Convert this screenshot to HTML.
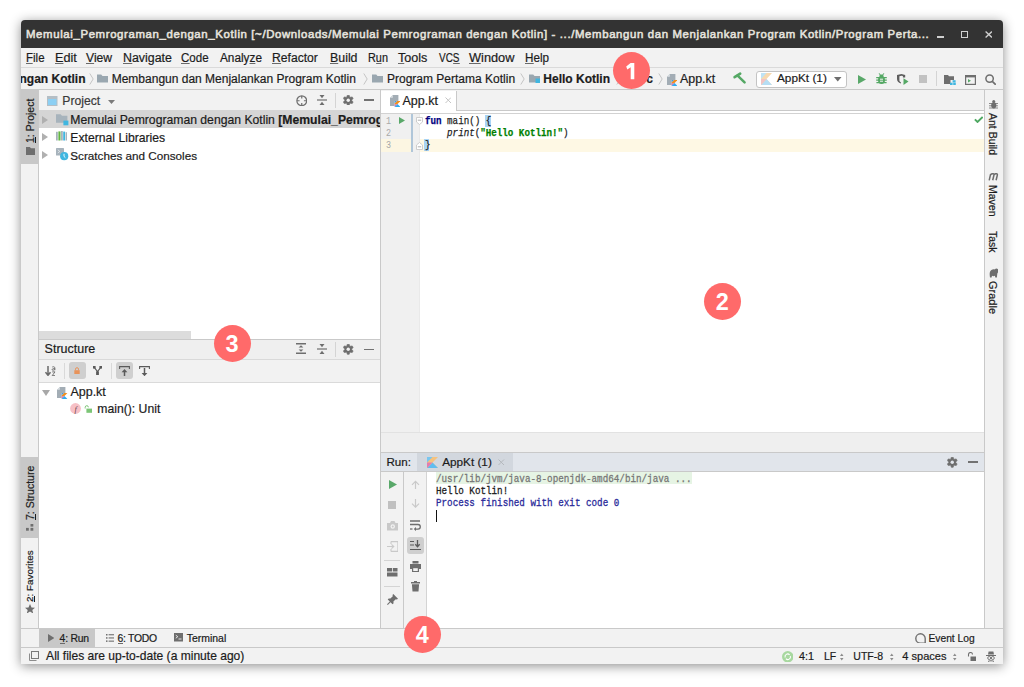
<!DOCTYPE html>
<html><head><meta charset="utf-8"><title>IDE</title><style>
*{margin:0;padding:0;box-sizing:border-box}
html,body{width:1024px;height:687px;background:#fff;overflow:hidden;font-family:"Liberation Sans",sans-serif;color:#1c1c1c}
.a{position:absolute;display:block}
.t{position:absolute;white-space:nowrap;line-height:1;-webkit-text-stroke:0.2px currentColor}
#win{position:absolute;left:21px;top:20px;width:982px;height:644px;background:#f2f2f2;border-radius:4px 4px 0 0;box-shadow:0 2px 12px rgba(0,0,0,.45)}
.mono{font-family:"Liberation Mono",monospace}
.badge{position:absolute;width:37px;height:37px;border-radius:50%;background:#ff6a6a;color:#fff;font-weight:bold;font-size:23.5px;text-align:center;line-height:38.6px;font-family:"Liberation Sans",sans-serif}
/**/.vu{background:linear-gradient(#1c1c1c,#1c1c1c) no-repeat;background-size:100% 1px;background-position:0 1.05em}
/**/.ul{background:linear-gradient(#6a6a6a,#6a6a6a) no-repeat;background-size:100% 1px;background-position:0 1.02em}
u{text-decoration:underline;text-underline-offset:1.5px;text-decoration-thickness:1px}
</style></head><body>
<div id="win"></div>
<div class="a" style="left:21px;top:20px;width:982px;height:28px;background:#333333;border-radius:4px 4px 0 0"></div>
<div class="t" style="left:26px;top:28.95px;font-size:11.4px;color:#e6e3de;letter-spacing:0.63px;-webkit-text-stroke:0.55px #e6e3de">Memulai_Pemrograman_dengan_Kotlin [~/Downloads/Memulai Pemrograman dengan Kotlin] - .../Membangun dan Menjalankan Program Kotlin/Program Perta...</div>
<div class="a" style="left:937px;top:36.3px;width:7px;height:1.5px;background:#d0d0d0;"></div>
<div class="a" style="left:961px;top:31.2px;width:7px;height:6.8px;background:transparent;border:1.5px solid #d0d0d0"></div>
<svg class="a" style="left:984.5px;top:31.2px;" width="7.5" height="7" viewBox="0 0 7.5 7"><path d="M.6 .6L6.9 6.4M6.9 .6L.6 6.4" stroke="#d0d0d0" stroke-width="1.3"/></svg>
<div class="a" style="left:21px;top:48px;width:982px;height:19px;background:#f2f2f2;"></div>
<div class="a" style="left:21px;top:67px;width:982px;height:1px;background:#dadada;"></div>
<div class="t" style="left:25.8px;top:51.54px;font-size:12px;color:#1c1c1c;transform:scaleX(0.958);transform-origin:0 0"><span class="ul">F</span>ile</div>
<div class="t" style="left:54.6px;top:51.54px;font-size:12px;color:#1c1c1c;transform:scaleX(1.058);transform-origin:0 0"><span class="ul">E</span>dit</div>
<div class="t" style="left:86.2px;top:51.54px;font-size:12px;color:#1c1c1c;transform:scaleX(1.012);transform-origin:0 0"><span class="ul">V</span>iew</div>
<div class="t" style="left:123.4px;top:51.54px;font-size:12px;color:#1c1c1c;transform:scaleX(1.033);transform-origin:0 0"><span class="ul">N</span>avigate</div>
<div class="t" style="left:181.4px;top:51.54px;font-size:12px;color:#1c1c1c;transform:scaleX(0.962);transform-origin:0 0"><span class="ul">C</span>ode</div>
<div class="t" style="left:220px;top:51.54px;font-size:12px;color:#1c1c1c;transform:scaleX(0.983);transform-origin:0 0">Analy<span class="ul">z</span>e</div>
<div class="t" style="left:272.3px;top:51.54px;font-size:12px;color:#1c1c1c;transform:scaleX(1.012);transform-origin:0 0"><span class="ul">R</span>efactor</div>
<div class="t" style="left:330.2px;top:51.54px;font-size:12px;color:#1c1c1c;transform:scaleX(1.030);transform-origin:0 0"><span class="ul">B</span>uild</div>
<div class="t" style="left:368px;top:51.54px;font-size:12px;color:#1c1c1c;transform:scaleX(0.904);transform-origin:0 0">R<span class="ul">u</span>n</div>
<div class="t" style="left:398.2px;top:51.54px;font-size:12px;color:#1c1c1c;transform:scaleX(1.046);transform-origin:0 0"><span class="ul">T</span>ools</div>
<div class="t" style="left:439.2px;top:51.54px;font-size:12px;color:#1c1c1c;transform:scaleX(0.831);transform-origin:0 0">VC<span class="ul">S</span></div>
<div class="t" style="left:469.3px;top:51.54px;font-size:12px;color:#1c1c1c;transform:scaleX(1.065);transform-origin:0 0"><span class="ul">W</span>indow</div>
<div class="t" style="left:525px;top:51.54px;font-size:12px;color:#1c1c1c;transform:scaleX(0.973);transform-origin:0 0"><span class="ul">H</span>elp</div>
<div class="a" style="left:21px;top:68px;width:982px;height:21px;background:#f2f2f2;"></div>
<div class="a" style="left:21px;top:89px;width:982px;height:1px;background:#c9c9c9;"></div>
<div class="a" style="left:21px;top:70px;width:64.5px;height:18px;overflow:hidden"><div class="t" style="right:0;top:2.84px;font-size:12px;font-weight:bold;color:#1c1c1c">Memulai Pemrograman dengan Kotlin</div></div>
<svg class="a" style="left:88.5px;top:73px;" width="5" height="12" viewBox="0 0 5 12"><path d="M.8 .5L4.2 6 .8 11.5" fill="none" stroke="#c4c4c4" stroke-width="1"/></svg>
<svg class="a" style="left:97px;top:74.3px;" width="11.5" height="9.5" viewBox="0 0 11.5 9.5"><path d="M0 0.5h4.2l1.3 1.5H11V8.5H0z" fill="#9aa7b0"/></svg>
<div class="t" style="left:111.7px;top:73.14px;font-size:12px;color:#1c1c1c">Membangun dan Menjalankan Program Kotlin</div>
<svg class="a" style="left:362.5px;top:73px;" width="5" height="12" viewBox="0 0 5 12"><path d="M.8 .5L4.2 6 .8 11.5" fill="none" stroke="#c4c4c4" stroke-width="1"/></svg>
<svg class="a" style="left:371.8px;top:74.3px;" width="11.5" height="9.5" viewBox="0 0 11.5 9.5"><path d="M0 0.5h4.2l1.3 1.5H11V8.5H0z" fill="#9aa7b0"/></svg>
<div class="t" style="left:387px;top:73.14px;font-size:12px;color:#1c1c1c">Program Pertama Kotlin</div>
<svg class="a" style="left:519.5px;top:73px;" width="5" height="12" viewBox="0 0 5 12"><path d="M.8 .5L4.2 6 .8 11.5" fill="none" stroke="#c4c4c4" stroke-width="1"/></svg>
<svg class="a" style="left:528.5px;top:74.3px;" width="11.5" height="9.5" viewBox="0 0 11.5 9.5"><path d="M0 0.5h4.2l1.3 1.5H11V8.5H0z" fill="#9aa7b0"/><rect x="6.5" y="4.5" width="4.5" height="4.5" fill="#40b6e0"/></svg>
<div class="t" style="left:543.3px;top:73.14px;font-size:12px;font-weight:bold;color:#1c1c1c">Hello Kotlin</div>
<svg class="a" style="left:615.5px;top:73px;" width="5" height="12" viewBox="0 0 5 12"><path d="M.8 .5L4.2 6 .8 11.5" fill="none" stroke="#c4c4c4" stroke-width="1"/></svg>
<svg class="a" style="left:621px;top:74.3px;" width="11.5" height="9.5" viewBox="0 0 11.5 9.5"><path d="M0 0.5h4.2l1.3 1.5H11V8.5H0z" fill="#9aa7b0"/></svg>
<div class="t" style="left:635px;top:73.14px;font-size:12px;font-weight:bold;color:#1c1c1c">src</div>
<svg class="a" style="left:657.8px;top:73px;" width="5" height="12" viewBox="0 0 5 12"><path d="M.8 .5L4.2 6 .8 11.5" fill="none" stroke="#c4c4c4" stroke-width="1"/></svg>
<svg class="a" style="left:666.5px;top:73.5px;" width="10.5" height="12.0" viewBox="0 0 10.5 12"><path d="M2.8 0H8.4V6H4.6V11H0V2.8z" fill="#a3adb5"/><path d="M0 2.8L2.8 0V2.8z" fill="#dde2e6"/><path d="M4.6 6H7.1L4.6 8.6z" fill="#3d9ee8"/><path d="M7.1 6H10.4L7.3 9.2H4.6V8.6z" fill="#f18e1f"/><path d="M4.6 9.2H7.3L4.6 12z" fill="#d86aa8"/><path d="M4.6 12L7.5 9.1 10.4 12z" fill="#2eaaf0"/></svg>
<div class="t" style="left:680px;top:72.80px;font-size:12.4px;color:#1c1c1c">App.kt</div>
<svg class="a" style="left:732px;top:71px;" width="15" height="14" viewBox="0 0 15 14"><path d="M2.6 6.2L8.2 2.6" stroke="#55a865" stroke-width="2.6" stroke-linecap="round"/><path d="M5.6 4.6L12.6 11.4" stroke="#55a865" stroke-width="2.5" stroke-linecap="round"/></svg>
<div class="a" style="left:755.5px;top:70.5px;width:91px;height:17px;background:#fff;border:1px solid #c4c4c4;border-radius:3px"></div>
<svg class="a" style="left:761px;top:73px;" width="11" height="12" viewBox="0 0 11 12"><path d="M0 0h11L5.5 6 11 12H0z" fill="#f6d9b0"/><path d="M0 0h5.5L0 6z" fill="#bfe3f5"/><path d="M0 12L5.5 6 11 12z" fill="#b6def4"/><path d="M0 6L5.5 6 0 12z" fill="#f2c3c3"/></svg>
<div class="t" style="left:777px;top:73.31px;font-size:11.8px;color:#1c1c1c">AppKt (1)</div>
<svg class="a" style="left:834px;top:77px;" width="7.5" height="4.5" viewBox="0 0 7.5 4.5"><path d="M0 0h7.5L3.75 4.5z" fill="#6e6e6e"/></svg>
<svg class="a" style="left:857.5px;top:74.5px;" width="8" height="9" viewBox="0 0 8 9"><path d="M0 0L8 4.5 0 9z" fill="#59a869"/></svg>
<svg class="a" style="left:876px;top:73px;" width="11" height="11" viewBox="0 0 11 11"><g fill="#55a865" stroke="#55a865"><path d="M3.2 .3L4.3 2.2M7.8 .3L6.7 2.2" stroke-width="1"/><ellipse cx="5.5" cy="2.9" rx="2.1" ry="1.4" stroke="none"/><ellipse cx="5.5" cy="7" rx="3.5" ry="3.9" stroke="none"/><path d="M.2 4.6H10.8M.2 7.1H10.8M.4 9.6H10.6" stroke-width="1.2"/></g><rect x="4" y="5.7" width="3" height="1" fill="#f2f2f2"/><rect x="4" y="7.7" width="3" height="1" fill="#f2f2f2"/></svg>
<svg class="a" style="left:896.5px;top:74px;" width="12" height="11" viewBox="0 0 12 11"><path d="M0 1L4.5 0 8.2 1V3.6H5.9V2.1L4.5 1.8 2.4 2.3V6.3C2.4 7.3 3 8.1 4 8.6V9.4C1.4 8.6 0 7 0 5z" fill="#5e5e5e"/><path d="M6.5 4.3L11.5 7.6 6.5 10.9z" fill="#55a865"/></svg>
<div class="a" style="left:919.2px;top:75px;width:7.8px;height:7.5px;background:#c2c2c2;"></div>
<div class="a" style="left:935.5px;top:71px;width:1px;height:15px;background:#d4d4d4;"></div>
<svg class="a" style="left:943.5px;top:74.5px;" width="12" height="10" viewBox="0 0 12 10"><path d="M0 0h4l1 1.2h5V5H6.5v4H0z" fill="#6e6e6e"/><g fill="#40b6e0"><rect x="8.6" y="5.2" width="3" height="2.3"/><rect x="6" y="7.7" width="2.6" height="2.3"/><rect x="9.2" y="7.7" width="2.6" height="2.3"/></g></svg>
<svg class="a" style="left:964.5px;top:74.5px;" width="11" height="10" viewBox="0 0 11 10"><rect x=".6" y=".6" width="9.8" height="8.8" fill="none" stroke="#6e6e6e" stroke-width="1.2"/><rect x=".6" y=".6" width="9.8" height="1.8" fill="#6e6e6e"/><path d="M3 4L6 5.7 3 7.4z" fill="#59a869"/></svg>
<svg class="a" style="left:984.5px;top:74px;" width="11.5" height="11" viewBox="0 0 11.5 11"><circle cx="4.6" cy="4.6" r="3.7" fill="none" stroke="#6e6e6e" stroke-width="1.5"/><path d="M7.3 7.3L10.8 10.8" stroke="#6e6e6e" stroke-width="1.7"/></svg>
<div class="a" style="left:21px;top:90px;width:17px;height:538px;background:#f2f2f2;"></div>
<div class="a" style="left:38px;top:90px;width:1px;height:538px;background:#c9c9c9;"></div>
<div class="a" style="left:21px;top:90px;width:17px;height:74px;background:#c8c8c8;"></div>
<div class="a" style="left:21px;top:457px;width:17px;height:80.5px;background:#c8c8c8;"></div>
<div class="t" style="left:24.7px;top:142.5px;font-size:10.5px;color:#1c1c1c;transform:rotate(-90deg);transform-origin:0 0;line-height:10.5px;text-underline-offset:-1px"><span class="vu">1</span>: Project</div>
<svg class="a" style="left:25.5px;top:147px;" width="9.5" height="8" viewBox="0 0 9.5 8"><path d="M0 0h3.8l1.2 1.2H9.5V8H0z" fill="#6e6e6e"/></svg>
<div class="t" style="left:24.7px;top:520px;font-size:10.5px;color:#1c1c1c;transform:rotate(-90deg);transform-origin:0 0;line-height:10.5px;text-underline-offset:-1px"><span class="vu">7</span>: Structure</div>
<svg class="a" style="left:26px;top:524.2px;" width="7.5" height="7" viewBox="0 0 7.5 7"><g fill="#6e6e6e"><rect x="4.5" y="0" width="2.8" height="2.6"/><rect x="0" y="3.9" width="2.8" height="2.8"/><rect x="4.5" y="3.9" width="2.8" height="2.8"/></g></svg>
<div class="t" style="left:24.7px;top:602px;font-size:9.9px;color:#1c1c1c;transform:rotate(-90deg);transform-origin:0 0;line-height:9.9px;text-underline-offset:-1px"><span class="vu">2</span>: Favorites</div>
<svg class="a" style="left:25px;top:603.5px;" width="10" height="9.5" viewBox="0 0 10 9.5"><path d="M5 0l1.5 3.4 3.5.3-2.7 2.3.9 3.5L5 7.6 1.8 9.5l.9-3.5L0 3.7l3.5-.3z" fill="#6e6e6e"/></svg>
<div class="a" style="left:39px;top:90px;width:341px;height:20px;background:#f2f2f2;"></div>
<svg class="a" style="left:47px;top:95.5px;" width="10.5" height="10" viewBox="0 0 10.5 10"><rect x="0" y="0" width="10.5" height="10" fill="#b4bec5"/><rect x="1" y="3" width="8.5" height="6" fill="#8ccff3"/></svg>
<div class="t" style="left:62.3px;top:94.87px;font-size:12.2px;color:#3a3a3a">Project</div>
<svg class="a" style="left:108px;top:99.5px;" width="7" height="4" viewBox="0 0 7 4"><path d="M0 0h7L3.5 4z" fill="#7a7a7a"/></svg>
<svg class="a" style="left:295.5px;top:94.5px;" width="11.5" height="11.5" viewBox="0 0 11.5 11.5"><circle cx="5.75" cy="5.75" r="4.9" fill="none" stroke="#6e6e6e" stroke-width="1.2"/><path d="M5.75 1v2.6M5.75 7.9v2.6M1 5.75h2.6M7.9 5.75h2.6" stroke="#6e6e6e" stroke-width="1.2"/></svg>
<svg class="a" style="left:317px;top:95px;" width="10" height="10" viewBox="0 0 10 10"><path d="M0 5h10" stroke="#6e6e6e" stroke-width="1.2"/><path d="M2.5 0h5L5 3.2z M2.5 10h5L5 6.8z" fill="#6e6e6e"/><path d="M5 0v2" stroke="#6e6e6e"/></svg>
<div class="a" style="left:334.5px;top:92.5px;width:1px;height:15px;background:#d4d4d4;"></div>
<svg class="a" style="left:343px;top:94.5px;" width="10.5" height="10.5" viewBox="0 0 10.5 10.5"><g transform="translate(5.25 5.25)"><path d="M-1.59 -3.12 L-0.90 -5.12 L0.90 -5.12 L1.59 -3.12 L1.91 -2.94 L3.98 -3.34 L4.89 -1.78 L3.50 -0.18 L3.50 0.18 L4.89 1.78 L3.98 3.34 L1.91 2.94 L1.59 3.12 L0.90 5.12 L-0.90 5.12 L-1.59 3.12 L-1.91 2.94 L-3.98 3.34 L-4.89 1.78 L-3.50 0.18 L-3.50 -0.18 L-4.89 -1.78 L-3.98 -3.34 L-1.91 -2.94z" fill="#6e6e6e" stroke="#6e6e6e" stroke-width=".6" stroke-linejoin="round"/><circle r="1.7" fill="#f2f2f2"/></g></svg>
<div class="a" style="left:364px;top:99px;width:10px;height:1.7px;background:#727272;"></div>
<div class="a" style="left:39px;top:110px;width:341px;height:229px;background:#fff;"></div>
<div class="a" style="left:39px;top:110.3px;width:341px;height:17.4px;background:#d5d5d5;"></div>
<svg class="a" style="left:42px;top:116px;" width="6" height="8" viewBox="0 0 6 8"><path d="M0 0L6 4 0 8z" fill="#b0b0b0"/></svg>
<svg class="a" style="left:55.5px;top:114.3px;" width="13" height="11.5" viewBox="0 0 13 11.5"><path d="M0 .3h4.6l1.4 1.5h5.4V8.7H0z" fill="#a7b3bc"/><rect x="7.4" y="6.6" width="5" height="4.7" fill="#40b6e0"/></svg>
<div class="t" style="left:70.3px;top:114.07px;font-size:12.2px;color:#1c1c1c">Memulai Pemrograman dengan Kotlin <b>[Memulai_Pemrograman_dengan_Kotlin]</b></div>
<svg class="a" style="left:42px;top:133px;" width="6" height="8" viewBox="0 0 6 8"><path d="M0 0L6 4 0 8z" fill="#b0b0b0"/></svg>
<svg class="a" style="left:55.5px;top:131.3px;" width="11.5" height="9.5" viewBox="0 0 11.5 9.5"><rect x="0" y=".8" width="1.8" height="8.7" fill="#a7b3bc"/><rect x="2.4" y=".4" width="2.1" height="9.1" fill="#62b543"/><rect x="5" y="0" width="1.8" height="9.5" fill="#a7b3bc"/><rect x="7.2" y=".6" width="1.9" height="8.9" fill="#40b6e0"/><rect x="9.6" y="1.2" width="1.8" height="8.3" fill="#a7b3bc"/></svg>
<div class="t" style="left:70.3px;top:131.97px;font-size:12.2px;color:#1c1c1c">External Libraries</div>
<svg class="a" style="left:42px;top:150.5px;" width="6" height="8" viewBox="0 0 6 8"><path d="M0 0L6 4 0 8z" fill="#b0b0b0"/></svg>
<svg class="a" style="left:55.5px;top:148px;" width="13" height="12.5" viewBox="0 0 13 12.5"><rect x="0" y="0" width="8" height="7.5" rx=".6" fill="#a7b3bc"/><path d="M1.8 1.8l2 1.6-2 1.6" fill="none" stroke="#e8ecef" stroke-width=".8"/><circle cx="8.2" cy="8.2" r="4.1" fill="#40b6e0"/><path d="M8 5.8v2.6l1.4 1.3" fill="none" stroke="#fff" stroke-width=".9"/></svg>
<div class="t" style="left:70.3px;top:149.60px;font-size:11.7px;color:#1c1c1c">Scratches and Consoles</div>
<div class="a" style="left:39px;top:331px;width:152px;height:7.5px;background:#dcdcdc;"></div>
<div class="a" style="left:39px;top:339px;width:341px;height:1px;background:#c9c9c9;"></div>
<div class="a" style="left:39px;top:340px;width:341px;height:19px;background:#efefef;"></div>
<div class="a" style="left:39px;top:359px;width:341px;height:1px;background:#d9d9d9;"></div>
<div class="t" style="left:44.6px;top:342.92px;font-size:12.5px;color:#1c1c1c">Structure</div>
<svg class="a" style="left:296px;top:343px;" width="10" height="11" viewBox="0 0 10 11"><path d="M0 .7h10M0 10.3h10" stroke="#6e6e6e" stroke-width="1.4"/><path d="M2.6 4.6h4.8L5 2.2z M2.6 6.4h4.8L5 8.8z" fill="#6e6e6e"/></svg>
<svg class="a" style="left:317px;top:344px;" width="10" height="10" viewBox="0 0 10 10"><path d="M0 5h10" stroke="#6e6e6e" stroke-width="1.2"/><path d="M2.5 0h5L5 3.2z M2.5 10h5L5 6.8z" fill="#6e6e6e"/></svg>
<div class="a" style="left:334.5px;top:341.5px;width:1px;height:15px;background:#d4d4d4;"></div>
<svg class="a" style="left:343px;top:344px;" width="10.5" height="10.5" viewBox="0 0 10.5 10.5"><g transform="translate(5.25 5.25)"><path d="M-1.59 -3.12 L-0.90 -5.12 L0.90 -5.12 L1.59 -3.12 L1.91 -2.94 L3.98 -3.34 L4.89 -1.78 L3.50 -0.18 L3.50 0.18 L4.89 1.78 L3.98 3.34 L1.91 2.94 L1.59 3.12 L0.90 5.12 L-0.90 5.12 L-1.59 3.12 L-1.91 2.94 L-3.98 3.34 L-4.89 1.78 L-3.50 0.18 L-3.50 -0.18 L-4.89 -1.78 L-3.98 -3.34 L-1.91 -2.94z" fill="#6e6e6e" stroke="#6e6e6e" stroke-width=".6" stroke-linejoin="round"/><circle r="1.7" fill="#efefef"/></g></svg>
<div class="a" style="left:364px;top:348.5px;width:10px;height:1.7px;background:#727272;"></div>
<div class="a" style="left:39px;top:360px;width:341px;height:22px;background:#f2f2f2;"></div>
<div class="a" style="left:39px;top:382px;width:341px;height:1px;background:#dadada;"></div>
<svg class="a" style="left:45px;top:365.5px;" width="11.5" height="10.5" viewBox="0 0 11.5 10.5"><path d="M3 0v9M.5 6.2L3 9.3 5.5 6.2" fill="none" stroke="#6a6a6a" stroke-width="1.5"/><path d="M7.2 1.2c.4-.6 1.8-.7 2.4 0 .3.4.3 1 .3 1.6V4.2M9.9 2.6c-1.2 0-2.8.1-2.8 1 0 .9 1.6.8 2.8-.2" fill="none" stroke="#6a6a6a" stroke-width=".9"/><path d="M7.2 5.9h2.8L7.2 9.6H10" fill="none" stroke="#6a6a6a" stroke-width=".9"/></svg>
<div class="a" style="left:63.5px;top:363px;width:1px;height:16px;background:#d9d9d9;"></div>
<div class="a" style="left:68.5px;top:362px;width:17px;height:17px;background:#cfcfcf;border-radius:3px"></div>
<svg class="a" style="left:74px;top:366.5px;" width="6" height="7.5" viewBox="0 0 6 7.5"><path d="M1.5 3.2V2.2a1.5 1.5 0 0 1 3 0v1" fill="none" stroke="#e8935a" stroke-width="1"/><rect x="0.3" y="3.2" width="5.4" height="4.3" fill="#e8935a"/></svg>
<svg class="a" style="left:92.8px;top:365.5px;" width="9" height="9.5" viewBox="0 0 9 9.5"><g fill="#5a5a5a"><rect x="0" y="0" width="2.6" height="2.6"/><rect x="6.4" y="0" width="2.6" height="2.6"/><rect x="3.1" y="5.3" width="2.8" height="4.2"/></g><path d="M1.6 1.8L4.5 5.5 7.4 1.8" fill="none" stroke="#5a5a5a" stroke-width="1.1"/></svg>
<div class="a" style="left:111px;top:363px;width:1px;height:16px;background:#d9d9d9;"></div>
<div class="a" style="left:115.5px;top:362px;width:17px;height:17px;background:#cfcfcf;border-radius:3px"></div>
<svg class="a" style="left:118.5px;top:365.5px;" width="11" height="10.5" viewBox="0 0 11 10.5"><path d="M.6 3V.6h9.8V3" fill="none" stroke="#5a5a5a" stroke-width="1.1"/><path d="M5.5 10.5V5" stroke="#5a5a5a" stroke-width="1.5"/><path d="M2.6 6.2L5.5 3 8.4 6.2z" fill="#5a5a5a"/></svg>
<svg class="a" style="left:139px;top:365.5px;" width="11" height="10.5" viewBox="0 0 11 10.5"><path d="M.6 3V.6h9.8V3" fill="none" stroke="#5a5a5a" stroke-width="1.1"/><path d="M5.5 2V7.5" stroke="#5a5a5a" stroke-width="1.5"/><path d="M2.6 7L5.5 10.2 8.4 7z" fill="#5a5a5a"/></svg>
<div class="a" style="left:39px;top:383px;width:341px;height:245px;background:#fff;"></div>
<svg class="a" style="left:41.5px;top:389.5px;" width="8" height="6" viewBox="0 0 8 6"><path d="M0 0H8L4 6z" fill="#a8a8a8"/></svg>
<svg class="a" style="left:57px;top:386.5px;" width="10.5" height="12.0" viewBox="0 0 10.5 12"><path d="M2.8 0H8.4V6H4.6V11H0V2.8z" fill="#a3adb5"/><path d="M0 2.8L2.8 0V2.8z" fill="#dde2e6"/><path d="M4.6 6H7.1L4.6 8.6z" fill="#3d9ee8"/><path d="M7.1 6H10.4L7.3 9.2H4.6V8.6z" fill="#f18e1f"/><path d="M4.6 9.2H7.3L4.6 12z" fill="#d86aa8"/><path d="M4.6 12L7.5 9.1 10.4 12z" fill="#2eaaf0"/></svg>
<div class="t" style="left:70.4px;top:385.92px;font-size:12.5px;color:#1c1c1c">App.kt</div>
<svg class="a" style="left:70px;top:403.3px;" width="11" height="11" viewBox="0 0 11 11"><circle cx="5.5" cy="5.5" r="5.4" fill="#f7c0c6"/><text x="5.6" y="8.7" text-anchor="middle" font-size="8.5" font-style="italic" font-family="Liberation Serif" fill="#6a4046">f</text></svg>
<svg class="a" style="left:84px;top:404.5px;" width="8.5" height="8" viewBox="0 0 8.5 8"><path d="M1.2 3.5V2.3a1.6 1.6 0 0 1 3.2 0" fill="none" stroke="#7cc576" stroke-width="1"/><rect x="2.4" y="3.6" width="5.6" height="4.2" fill="#7cc576"/></svg>
<div class="t" style="left:97.3px;top:403.27px;font-size:12.2px;color:#1c1c1c">main(): Unit</div>
<div class="a" style="left:380px;top:90px;width:1px;height:538px;background:#c9c9c9;"></div>
<div class="a" style="left:381px;top:90px;width:604px;height:20px;background:#f2f2f2;"></div>
<div class="a" style="left:381px;top:110px;width:604px;height:1px;background:#c9c9c9;"></div>
<div class="a" style="left:381px;top:90.5px;width:75px;height:20.5px;background:#fff;"></div>
<div class="a" style="left:456px;top:90.5px;width:1px;height:20px;background:#c9c9c9;"></div>
<div class="a" style="left:381px;top:111px;width:604px;height:2px;background:#fff;"></div>
<div class="a" style="left:381px;top:113px;width:604px;height:1px;background:#d2d2d2;"></div>
<svg class="a" style="left:389.5px;top:94.8px;" width="10.5" height="12.0" viewBox="0 0 10.5 12"><path d="M2.8 0H8.4V6H4.6V11H0V2.8z" fill="#a3adb5"/><path d="M0 2.8L2.8 0V2.8z" fill="#dde2e6"/><path d="M4.6 6H7.1L4.6 8.6z" fill="#3d9ee8"/><path d="M7.1 6H10.4L7.3 9.2H4.6V8.6z" fill="#f18e1f"/><path d="M4.6 9.2H7.3L4.6 12z" fill="#d86aa8"/><path d="M4.6 12L7.5 9.1 10.4 12z" fill="#2eaaf0"/></svg>
<div class="t" style="left:402.5px;top:95.02px;font-size:12.5px;color:#1c1c1c">App.kt</div>
<svg class="a" style="left:444.5px;top:97px;" width="6.5" height="6.5" viewBox="0 0 6.5 6.5"><path d="M.5 .5l5.5 5.5M6 .5L.5 6" stroke="#c4c4c4" stroke-width="1"/></svg>
<div class="a" style="left:381px;top:114px;width:604px;height:318px;background:#fff;"></div>
<div class="a" style="left:381px;top:114px;width:38px;height:318px;background:#f0f0f0;"></div>
<div class="a" style="left:419px;top:114px;width:1px;height:318px;background:#e9e9e9;"></div>
<div class="a" style="left:381px;top:138.8px;width:30px;height:12.8px;background:#fcf6e2;"></div>
<div class="a" style="left:420px;top:138.8px;width:564px;height:12.8px;background:#fef8e4;"></div>
<div class="a" style="left:411px;top:114.2px;width:1.6px;height:37.6px;background:#b0c6d9;"></div>
<div class="t mono" style="left:385.5px;top:115.55px;font-size:10.5px;transform:scaleX(0.8);transform-origin:0 0;-webkit-text-stroke:0.25px currentColor;color:#a8a8a8;-webkit-text-stroke:0">1</div>
<div class="t mono" style="left:385.5px;top:127.85px;font-size:10.5px;transform:scaleX(0.8);transform-origin:0 0;-webkit-text-stroke:0.25px currentColor;color:#a8a8a8;-webkit-text-stroke:0">2</div>
<div class="t mono" style="left:385.5px;top:140.15px;font-size:10.5px;transform:scaleX(0.8);transform-origin:0 0;-webkit-text-stroke:0.25px currentColor;color:#a8a8a8;-webkit-text-stroke:0">3</div>
<svg class="a" style="left:399px;top:116.8px;" width="6" height="7" viewBox="0 0 6 7"><path d="M0 0L6 3.5 0 7z" fill="#59a869"/></svg>
<svg class="a" style="left:416px;top:116.5px;" width="7" height="8" viewBox="0 0 7 8"><path d="M.5 .5h6v4.5L3.5 7.5.5 5z" fill="#fff" stroke="#c8c8c8" stroke-width=".9"/><path d="M1.8 3.2h3.4" stroke="#9a9a9a" stroke-width=".8"/></svg>
<svg class="a" style="left:416px;top:141.8px;" width="7" height="8" viewBox="0 0 7 8"><path d="M.5 7.5h6V3L3.5 .5.5 3z" fill="#fff" stroke="#c8c8c8" stroke-width=".9"/><path d="M1.8 4.8h3.4" stroke="#9a9a9a" stroke-width=".8"/></svg>
<div class="a" style="left:485px;top:114.5px;width:5.5px;height:12px;background:#a9d4f5;"></div>
<div class="a" style="left:424px;top:139.10000000000002px;width:5.3px;height:12px;background:#a9d4f5;"></div>
<div class="t mono" style="left:424.5px;top:115.38px;font-size:11.5px;transform:scaleX(0.8);transform-origin:0 0;-webkit-text-stroke:0.25px currentColor;color:#1c1c1c"><b style="color:#000080">fun</b> main() {</div>
<div class="t mono" style="left:424.5px;top:127.28px;font-size:11.5px;transform:scaleX(0.8);transform-origin:0 0;-webkit-text-stroke:0.25px currentColor;color:#1c1c1c;white-space:pre">    <i>print</i>(<b style="color:#008000">"Hello Kotlin!"</b>)</div>
<div class="t mono" style="left:424.5px;top:139.48px;font-size:11.5px;transform:scaleX(0.8);transform-origin:0 0;-webkit-text-stroke:0.25px currentColor;color:#1c1c1c">}</div>
<svg class="a" style="left:973.5px;top:116px;" width="9.5" height="7" viewBox="0 0 9.5 7"><path d="M.9 3.4L3.5 5.9 8.7 .9" fill="none" stroke="#4fa862" stroke-width="2"/></svg>
<div class="a" style="left:381px;top:432px;width:604px;height:1px;background:#e2e2e2;"></div>
<div class="a" style="left:381px;top:433px;width:604px;height:19px;background:#efefef;"></div>
<div class="a" style="left:381px;top:452px;width:604px;height:1px;background:#c9c9c9;"></div>
<div class="a" style="left:381px;top:453px;width:604px;height:18px;background:#e1e5eb;"></div>
<div class="a" style="left:417px;top:453px;width:95.5px;height:18px;background:#d2d7de;"></div>
<div class="a" style="left:381px;top:471px;width:604px;height:1px;background:#c9c9c9;"></div>
<div class="t" style="left:386.4px;top:455.98px;font-size:11.6px;color:#1c1c1c">Run:</div>
<svg class="a" style="left:426.5px;top:456.5px;" width="11" height="11" viewBox="0 0 11 11"><path d="M0 0h11L5.5 5.5 11 11H0z" fill="#f6c27e"/><path d="M0 0h5.5L0 5.5z" fill="#78c6ef"/><path d="M0 11L5.5 5.5 11 11z" fill="#5fbdf0"/><path d="M0 5.5h5.5L0 11z" fill="#e37cb0"/></svg>
<div class="t" style="left:442.2px;top:455.85px;font-size:11.75px;color:#1c1c1c">AppKt (1)</div>
<svg class="a" style="left:498px;top:459px;" width="6.5" height="6.5" viewBox="0 0 6.5 6.5"><path d="M.5 .5l5.5 5.5M6 .5L.5 6" stroke="#b4b8bd" stroke-width="1"/></svg>
<svg class="a" style="left:947px;top:457px;" width="10.5" height="10.5" viewBox="0 0 10.5 10.5"><g transform="translate(5.25 5.25)"><path d="M-1.59 -3.12 L-0.90 -5.12 L0.90 -5.12 L1.59 -3.12 L1.91 -2.94 L3.98 -3.34 L4.89 -1.78 L3.50 -0.18 L3.50 0.18 L4.89 1.78 L3.98 3.34 L1.91 2.94 L1.59 3.12 L0.90 5.12 L-0.90 5.12 L-1.59 3.12 L-1.91 2.94 L-3.98 3.34 L-4.89 1.78 L-3.50 0.18 L-3.50 -0.18 L-4.89 -1.78 L-3.98 -3.34 L-1.91 -2.94z" fill="#6e6e6e" stroke="#6e6e6e" stroke-width=".6" stroke-linejoin="round"/><circle r="1.7" fill="#e1e5eb"/></g></svg>
<div class="a" style="left:968px;top:461px;width:10px;height:1.7px;background:#727272;"></div>
<div class="a" style="left:381px;top:472px;width:604px;height:156px;background:#fff;"></div>
<div class="a" style="left:381px;top:472px;width:22px;height:156px;background:#f2f2f2;"></div>
<div class="a" style="left:403px;top:472px;width:1px;height:156px;background:#c9c9c9;"></div>
<div class="a" style="left:404px;top:472px;width:22px;height:156px;background:#f2f2f2;"></div>
<div class="a" style="left:426px;top:472px;width:1px;height:156px;background:#d4d4d4;"></div>
<svg class="a" style="left:388.5px;top:480px;" width="8" height="9" viewBox="0 0 8 9"><path d="M0 0L8 4.5 0 9z" fill="#59a869"/></svg>
<div class="a" style="left:388px;top:501px;width:8px;height:8px;background:#c0c0c0;"></div>
<svg class="a" style="left:386.5px;top:521px;" width="11.5" height="9.5" viewBox="0 0 11.5 9.5"><path d="M0 2h3l1-2h3.5l1 2h3v7.5H0z" fill="#c9c9c9"/><circle cx="5.75" cy="5.5" r="2.2" fill="#f2f2f2"/><circle cx="5.75" cy="5.5" r="1" fill="#c9c9c9"/></svg>
<svg class="a" style="left:386.5px;top:540.5px;" width="11.5" height="11" viewBox="0 0 11.5 11"><path d="M4 .6h6.9v9.8H4M4 3v-2.4M4 8v2.4" fill="none" stroke="#c9c9c9" stroke-width="1.1"/><path d="M0 5.5h6.5M4.5 3.3l2.3 2.2-2.3 2.2" fill="none" stroke="#c9c9c9" stroke-width="1.1"/></svg>
<div class="a" style="left:384px;top:559.5px;width:16px;height:1px;background:#d4d4d4;"></div>
<svg class="a" style="left:387px;top:568px;" width="10.5" height="8.5" viewBox="0 0 10.5 8.5"><g fill="#6e6e6e"><rect x="0" y="0" width="5" height="3.5"/><rect x="5.8" y="0" width="4.7" height="3.5"/><rect x="0" y="4.5" width="10.5" height="4"/></g></svg>
<div class="a" style="left:384px;top:585.5px;width:16px;height:1px;background:#d4d4d4;"></div>
<svg class="a" style="left:387px;top:593.5px;" width="11" height="11" viewBox="0 0 11 11"><path d="M6.3 0l4.7 4.7-1.1.8-1.1-.3-2.4 2.4.2 1.7-1 1-2.1-2.1L.8 11 0 10.2l2.8-2.7L.7 5.4l1-1 1.7.2 2.4-2.4-.3-1.1z" fill="#6e6e6e"/></svg>
<svg class="a" style="left:410.5px;top:479.5px;" width="9" height="9.5" viewBox="0 0 9 9.5"><path d="M4.5 9.5V1.5M1 4.8l3.5-3.5 3.5 3.5" fill="none" stroke="#c9c9c9" stroke-width="1.2"/></svg>
<svg class="a" style="left:410.5px;top:498.5px;" width="9" height="9.5" viewBox="0 0 9 9.5"><path d="M4.5 0v8M1 4.7l3.5 3.5 3.5-3.5" fill="none" stroke="#c9c9c9" stroke-width="1.2"/></svg>
<svg class="a" style="left:409.5px;top:519.5px;" width="11" height="11" viewBox="0 0 11 11"><path d="M0 1h10M0 4.5h8a2.3 2.3 0 0 1 0 4.6H5.5" fill="none" stroke="#6e6e6e" stroke-width="1.3"/><path d="M6 7l-2.2 2.1 2.2 2" fill="#6e6e6e"/><path d="M0 9h2.5" stroke="#6e6e6e" stroke-width="1.3"/></svg>
<div class="a" style="left:406.5px;top:537px;width:17.5px;height:16.5px;background:#cfcfcf;border-radius:3px"></div>
<svg class="a" style="left:410px;top:540px;" width="11" height="11" viewBox="0 0 11 11"><path d="M0 1.5h4M0 5h4M0 9.5h11" stroke="#5a5a5a" stroke-width="1.2"/><path d="M7.5 0v6.5M5.3 4.3l2.2 2.4 2.2-2.4" fill="none" stroke="#5a5a5a" stroke-width="1.3"/></svg>
<svg class="a" style="left:409.5px;top:561px;" width="11" height="11" viewBox="0 0 11 11"><path d="M2.5 0h6v2.5h-6z M0 3h11v5H9v3H2V8H0z" fill="#6e6e6e"/><rect x="3.2" y="7.2" width="4.6" height="2.8" fill="#f2f2f2"/></svg>
<svg class="a" style="left:410.5px;top:581px;" width="9" height="10.5" viewBox="0 0 9 10.5"><path d="M3 0h3v1h3v1.6H0V1h3z M.9 3.2h7.2l-.6 7.3H1.5z" fill="#6e6e6e"/></svg>
<div class="a" style="left:436px;top:472px;width:255.5px;height:11.5px;background:#e6f4e4;"></div>
<div class="t mono" style="left:435.5px;top:472.68px;font-size:11.5px;transform:scaleX(0.805);transform-origin:0 0;color:#767676;white-space:pre;-webkit-text-stroke:0.3px #767676;">/usr/lib/jvm/java-8-openjdk-amd64/bin/java ...</div>
<div class="t mono" style="left:435.5px;top:484.88px;font-size:11.5px;transform:scaleX(0.805);transform-origin:0 0;color:#1c1c1c;white-space:pre;-webkit-text-stroke:0.3px #1c1c1c;">Hello Kotlin!</div>
<div class="t mono" style="left:435.5px;top:497.08px;font-size:11.5px;transform:scaleX(0.805);transform-origin:0 0;color:#2a2a9a;white-space:pre;-webkit-text-stroke:0.3px #2a2a9a;">Process finished with exit code 0</div>
<div class="a" style="left:435.5px;top:509.5px;width:1.7px;height:12.7px;background:#111;"></div>
<div class="a" style="left:984px;top:90px;width:1px;height:538px;background:#c9c9c9;"></div>
<div class="a" style="left:985px;top:90px;width:18px;height:538px;background:#f2f2f2;"></div>
<svg class="a" style="left:988.5px;top:100px;" width="9.5" height="8.5" viewBox="0 0 9.5 8.5"><g fill="#6e6e6e"><ellipse cx="4.75" cy="5.3" rx="2.6" ry="3.1"/><circle cx="4.75" cy="1.6" r="1.5"/><path d="M0 3.5h9.5M0 5.8h9.5M0 8h9.5" stroke="#6e6e6e" stroke-width=".8"/></g></svg>
<div class="t" style="left:998.3px;top:112.7px;font-size:10.5px;color:#1c1c1c;transform:rotate(90deg);transform-origin:0 0;line-height:10.5px">Ant Build</div>
<svg class="a" style="left:987.5px;top:172.5px;" width="11.5" height="8" viewBox="0 0 11.5 8"><path d="M1.2 7.3L2.6 1.1M2.4 2C3.2.8 4.2.6 5 .7 6 .9 6.1 1.6 5.9 2.3L4.7 7.3M5.8 2C6.6.8 7.6.6 8.4.7 9.4.9 9.5 1.6 9.3 2.3L8.1 7.3" fill="none" stroke="#6e6e6e" stroke-width="1.5"/></svg>
<div class="t" style="left:998.3px;top:185px;font-size:10.5px;color:#1c1c1c;transform:rotate(90deg);transform-origin:0 0;line-height:10.5px">Maven</div>
<div class="t" style="left:998.3px;top:231.3px;font-size:10.5px;color:#1c1c1c;transform:rotate(90deg);transform-origin:0 0;line-height:10.5px">Task</div>
<svg class="a" style="left:988.5px;top:268px;" width="9.5" height="9.5" viewBox="0 0 9.5 9.5"><path d="M9 1.2C8 0 6.5.2 5.8 1.5 4 1 1.5 1.8.8 4.5.5 6 .8 8.5 1 9.5h1.6l.4-1.7c.9.5 2 .5 2.9 0l.4 1.7h1.6l.4-4C9 5 9.6 3 9 1.2z" fill="#6e6e6e"/></svg>
<div class="t" style="left:998.3px;top:281px;font-size:11px;color:#1c1c1c;transform:rotate(90deg);transform-origin:0 0;line-height:11px">Gradle</div>
<div class="a" style="left:21px;top:628px;width:982px;height:1px;background:#c9c9c9;"></div>
<div class="a" style="left:21px;top:629px;width:982px;height:17.5px;background:#f2f2f2;"></div>
<div class="a" style="left:38.5px;top:629px;width:56.5px;height:17.5px;background:#c8c8c8;"></div>
<svg class="a" style="left:47.5px;top:633.5px;" width="6.5" height="8" viewBox="0 0 6.5 8"><path d="M0 0L6.5 4 0 8z" fill="#6e6e6e"/></svg>
<div class="t" style="left:59.6px;top:633.70px;font-size:10.4px;color:#1c1c1c;letter-spacing:-0.25px"><span class="ul">4</span>: Run</div>
<svg class="a" style="left:105.5px;top:633.5px;" width="8" height="8" viewBox="0 0 8 8"><g fill="#6e6e6e"><rect x="0" y="0" width="1.5" height="1.5"/><rect x="0" y="3.2" width="1.5" height="1.5"/><rect x="0" y="6.4" width="1.5" height="1.5"/><rect x="2.6" y=".2" width="5.4" height="1.1"/><rect x="2.6" y="3.4" width="5.4" height="1.1"/><rect x="2.6" y="6.6" width="5.4" height="1.1"/></g></svg>
<div class="t" style="left:117.6px;top:633.70px;font-size:10.4px;color:#1c1c1c;letter-spacing:-0.3px"><span class="ul">6</span>: TODO</div>
<svg class="a" style="left:174px;top:633px;" width="9" height="8.5" viewBox="0 0 9 8.5"><rect x="0" y="0" width="9" height="8.5" fill="#6e6e6e"/><path d="M1.8 2.2l2 1.5-2 1.5" fill="none" stroke="#f2f2f2" stroke-width=".9"/><path d="M4.5 6h3" stroke="#f2f2f2" stroke-width=".9"/></svg>
<div class="t" style="left:186.8px;top:633.65px;font-size:10.45px;color:#1c1c1c">Terminal</div>
<svg class="a" style="left:915px;top:632.5px;" width="11" height="10.5" viewBox="0 0 11 10.5"><path d="M5.5 .8a4.7 4.7 0 1 0 0 9.4h4.7V5.5A4.7 4.7 0 0 0 5.5 .8z" fill="none" stroke="#707070" stroke-width="1.4"/></svg>
<div class="t" style="left:928.5px;top:633.82px;font-size:10.25px;color:#1c1c1c">Event Log</div>
<div class="a" style="left:21px;top:646.5px;width:982px;height:1px;background:#c9c9c9;"></div>
<div class="a" style="left:21px;top:647.5px;width:982px;height:16.5px;background:#f2f2f2;"></div>
<svg class="a" style="left:28.5px;top:651px;" width="10" height="10" viewBox="0 0 10 10"><path d="M.5 2.5v7h7" fill="none" stroke="#8c8c8c" stroke-width="1"/><rect x="2.5" y=".5" width="7" height="7" fill="none" stroke="#7a7a7a" stroke-width="1"/></svg>
<div class="t" style="left:46.1px;top:650.40px;font-size:12.05px;color:#1c1c1c">All files are up-to-date (a minute ago)</div>
<svg class="a" style="left:781.5px;top:650.5px;" width="11.5" height="11.5" viewBox="0 0 11.5 11.5"><circle cx="5.75" cy="5.75" r="5.75" fill="#a8d8a0"/><path d="M3.2 6.5a2.6 2.6 0 0 1 4.4-2.6M8.3 5a2.6 2.6 0 0 1-4.4 2.6" fill="none" stroke="#fff" stroke-width="1.1"/></svg>
<div class="t" style="left:799px;top:651.16px;font-size:10.8px;color:#1c1c1c">4:1</div>
<div class="t" style="left:824px;top:651.50px;font-size:10.4px;color:#1c1c1c">LF</div>
<svg class="a" style="left:840px;top:652.5px;" width="3.5" height="8" viewBox="0 0 3.5 8"><path d="M0 3h3.5L1.75 .5z M0 5h3.5L1.75 7.5z" fill="#8c8c8c"/></svg>
<div class="t" style="left:853.3px;top:651.41px;font-size:10.5px;color:#1c1c1c">UTF-8</div>
<svg class="a" style="left:890px;top:652.5px;" width="3.5" height="8" viewBox="0 0 3.5 8"><path d="M0 3h3.5L1.75 .5z M0 5h3.5L1.75 7.5z" fill="#8c8c8c"/></svg>
<div class="t" style="left:902.3px;top:650.95px;font-size:11.05px;color:#1c1c1c">4 spaces</div>
<svg class="a" style="left:953px;top:652.5px;" width="3.5" height="8" viewBox="0 0 3.5 8"><path d="M0 3h3.5L1.75 .5z M0 5h3.5L1.75 7.5z" fill="#8c8c8c"/></svg>
<svg class="a" style="left:966.5px;top:651.5px;" width="9.5" height="9.5" viewBox="0 0 9.5 9.5"><path d="M1.5 4.5V2.5a2 2 0 0 1 4 0" fill="none" stroke="#6e6e6e" stroke-width="1.1"/><rect x="3.5" y="4.5" width="6" height="5" fill="#6e6e6e"/></svg>
<svg class="a" style="left:986px;top:651px;" width="10" height="10.5" viewBox="0 0 10 10.5"><path d="M2 3.5h6l-.6-3H2.6z M0 4h10v1H0z" fill="#6e6e6e"/><circle cx="3.2" cy="7" r="1.5" fill="none" stroke="#6e6e6e" stroke-width=".9"/><circle cx="6.8" cy="7" r="1.5" fill="none" stroke="#6e6e6e" stroke-width=".9"/><path d="M2 10.5c1-1 5-1 6 0" stroke="#6e6e6e" fill="none" stroke-width="1"/></svg>
<div class="badge" style="left:612.5px;top:51.8px"><svg style="position:absolute;left:0;top:0" width="37" height="37" viewBox="0 0 37 37"><path d="M17.6 10.9H21.3V27.3H17.7V15.3L14.3 17.4 13.2 14.6z" fill="#fff"/></svg></div>
<div class="badge" style="left:703.7px;top:282.5px">2</div>
<div class="badge" style="left:213.5px;top:324.9px">3</div>
<div class="badge" style="left:403.9px;top:615.9px">4</div>
</body></html>
